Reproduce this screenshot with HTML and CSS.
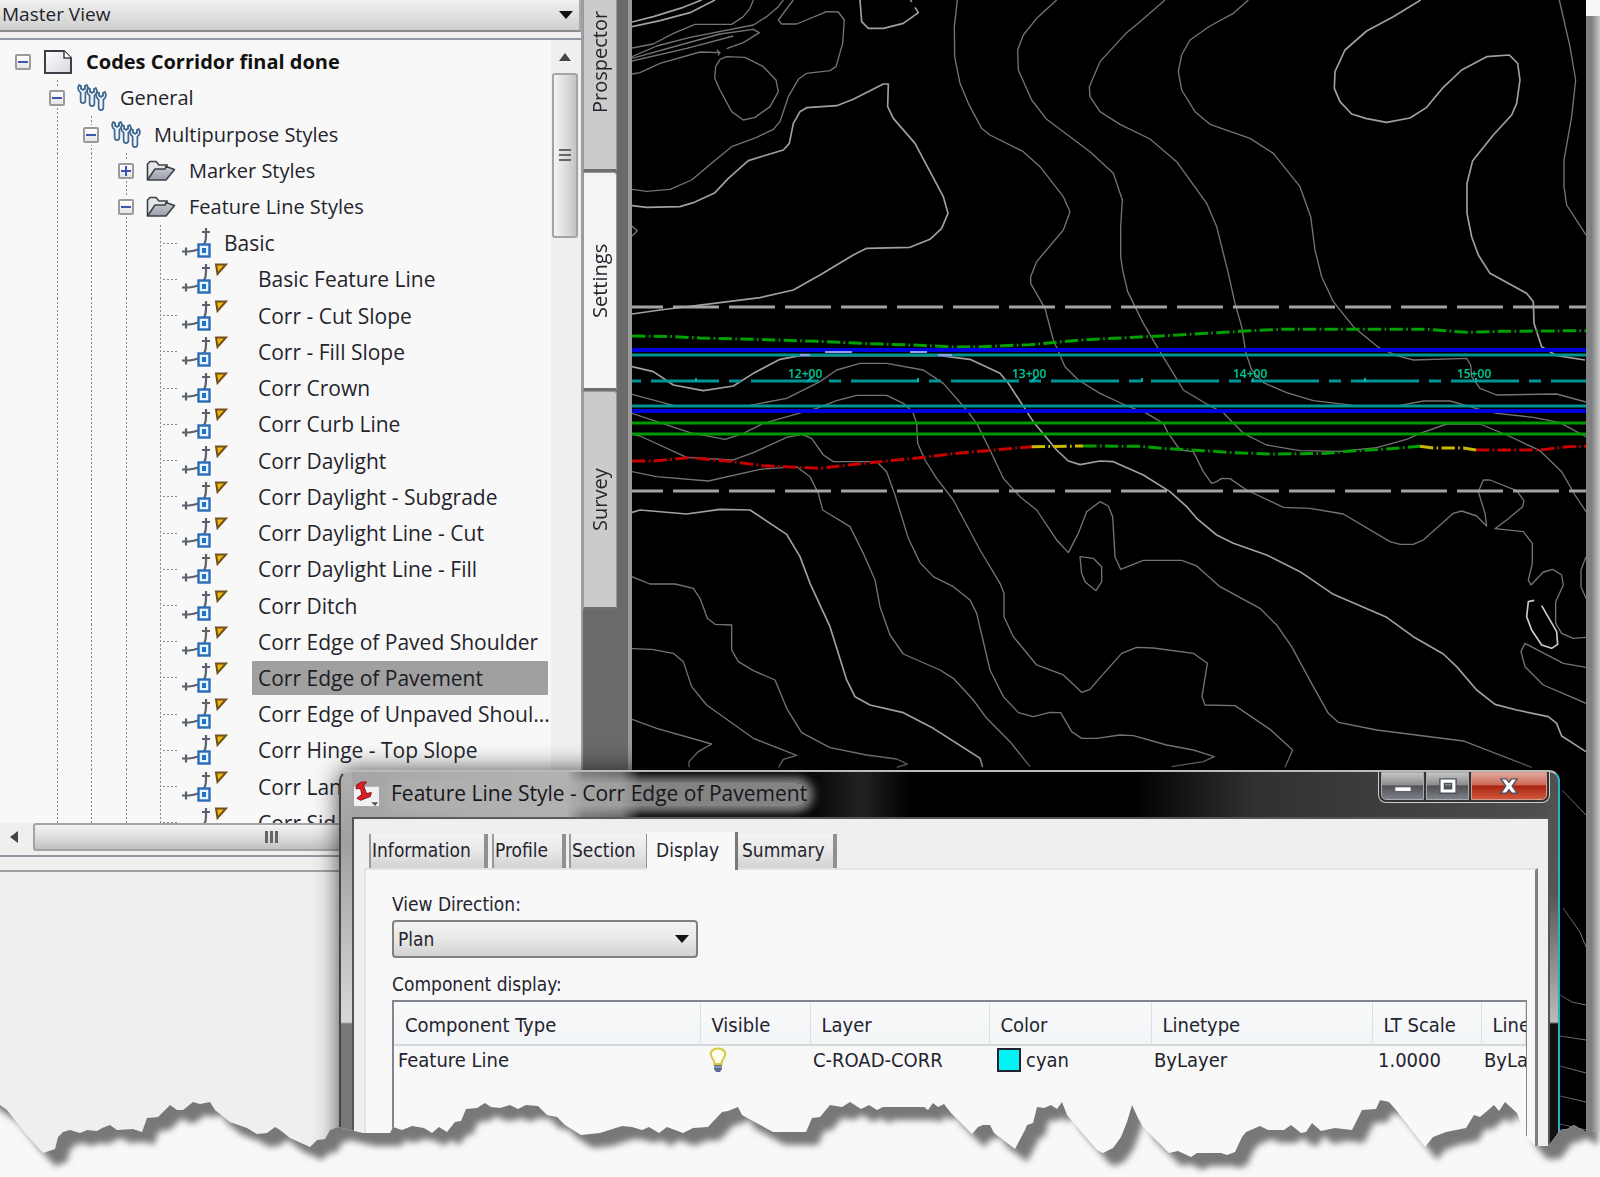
FILE: index.html
```html
<!DOCTYPE html>
<html lang="en">
<head>
<meta charset="utf-8">
<title>Feature Line Style - Corr Edge of Pavement</title>
<link rel="stylesheet" href="styles.css">
</head>
<body>
<svg class="defs" aria-hidden="true">
  <defs>
    <linearGradient id="paper" x1="0" y1="0" x2="1" y2="1"><stop offset="0" stop-color="#fff"/><stop offset="1" stop-color="#d4d7dc"/></linearGradient>
    <linearGradient id="folderFill" x1="0" y1="0" x2="0" y2="1"><stop offset="0" stop-color="#c9ccd2"/><stop offset="1" stop-color="#9a9ea8"/></linearGradient>
    <symbol id="doc" viewBox="0 0 30 26"><path d="M2 2H21L28 9V24H2Z" fill="url(#paper)" stroke="#3c4046" stroke-width="2"/><path d="M21 2V9H28" fill="#fff" stroke="#3c4046" stroke-width="1.5"/></symbol>
    <symbol id="wrench" viewBox="0 0 12 22"><path d="M2 1C0 4 1 7 3.500 9V17C3.500 21 8.500 21 8.500 17V9C11 7 12 4 10 1L8 2V5L6 6L4 5V2Z" fill="#eef4fa" stroke="#41698f" stroke-width="1.800"/><path d="M3 1V5L6 7L9 5V1L8 5H4Z" fill="#41698f"/></symbol>
    <symbol id="wrenches" viewBox="0 0 30 28"><use href="#wrench" x="0" y="0" width="12" height="21"/><use href="#wrench" x="9" y="3" width="12" height="21"/><use href="#wrench" x="18" y="7" width="12" height="21"/></symbol>
    <symbol id="folder" viewBox="0 0 30 22"><path d="M1.500 20V4L4 1.500H10L13 5H21V9" fill="#e4e6ea" stroke="#3c4046" stroke-width="1.600"/><path d="M1.500 20L9 9H19L20 6.500L28.500 9.500L20 20Z" fill="url(#folderFill)" stroke="#3c4046" stroke-width="1.600" stroke-linejoin="round"/></symbol>
    <symbol id="feat" viewBox="0 0 48 32"><path d="M24 1V9Q24 14 22 18M20 5H28M0 24.500H7Q12 24 16 22.500M4 20.500V28.500" fill="none" stroke="#59616b" stroke-width="2.200"/><rect x="16.500" y="17.500" width="11" height="12" fill="#e8f4ff" stroke="#2b6cb5" stroke-width="2.400"/><rect x="20" y="21" width="4" height="5" fill="#1874d2"/></symbol>
    <symbol id="flagged" viewBox="0 0 48 32"><use href="#feat" width="48" height="32"/><path d="M34 1.500H44L35.500 11Z" fill="#f2b90c" stroke="#70501a" stroke-width="2"/></symbol>
  </defs>
</svg>
<main class="desktop">
  <section class="toolspace" aria-label="Toolspace">
    <div class="view-box"><select class="view-select" aria-label="View"><option>Master View</option></select></div>
    <div class="tree-frame">
      <ul class="tree">
        <li class="row l0"><button class="exp minus" aria-label="Collapse"></button><svg class="ico doc"><use href="#doc"/></svg><span class="name bold">Codes Corridor final done</span></li>
        <li class="row l1"><button class="exp minus" aria-label="Collapse"></button><svg class="ico wr"><use href="#wrenches"/></svg><span class="name">General</span></li>
        <li class="row l2"><button class="exp minus" aria-label="Collapse"></button><svg class="ico wr"><use href="#wrenches"/></svg><span class="name">Multipurpose Styles</span></li>
        <li class="row l3"><button class="exp minus plus" aria-label="Expand"></button><svg class="ico fo"><use href="#folder"/></svg><span class="name">Marker Styles</span></li>
        <li class="row l3"><button class="exp minus" aria-label="Collapse"></button><svg class="ico fo"><use href="#folder"/></svg><span class="name">Feature Line Styles</span></li>
        <li class="row leaf first"><svg class="ico ft"><use href="#feat"/></svg><span class="name">Basic</span></li>
        <li class="row leaf"><svg class="ico ft"><use href="#flagged"/></svg><span class="name">Basic Feature Line</span></li>
        <li class="row leaf"><svg class="ico ft"><use href="#flagged"/></svg><span class="name">Corr - Cut Slope</span></li>
        <li class="row leaf"><svg class="ico ft"><use href="#flagged"/></svg><span class="name">Corr - Fill Slope</span></li>
        <li class="row leaf"><svg class="ico ft"><use href="#flagged"/></svg><span class="name">Corr Crown</span></li>
        <li class="row leaf"><svg class="ico ft"><use href="#flagged"/></svg><span class="name">Corr Curb Line</span></li>
        <li class="row leaf"><svg class="ico ft"><use href="#flagged"/></svg><span class="name">Corr Daylight</span></li>
        <li class="row leaf"><svg class="ico ft"><use href="#flagged"/></svg><span class="name">Corr Daylight - Subgrade</span></li>
        <li class="row leaf"><svg class="ico ft"><use href="#flagged"/></svg><span class="name">Corr Daylight Line - Cut</span></li>
        <li class="row leaf"><svg class="ico ft"><use href="#flagged"/></svg><span class="name">Corr Daylight Line - Fill</span></li>
        <li class="row leaf"><svg class="ico ft"><use href="#flagged"/></svg><span class="name">Corr Ditch</span></li>
        <li class="row leaf"><svg class="ico ft"><use href="#flagged"/></svg><span class="name">Corr Edge of Paved Shoulder</span></li>
        <li class="row leaf"><svg class="ico ft"><use href="#flagged"/></svg><span class="name selected">Corr Edge of Pavement</span></li>
        <li class="row leaf"><svg class="ico ft"><use href="#flagged"/></svg><span class="name">Corr Edge of Unpaved Shoul...</span></li>
        <li class="row leaf"><svg class="ico ft"><use href="#flagged"/></svg><span class="name">Corr Hinge - Top Slope</span></li>
        <li class="row leaf"><svg class="ico ft"><use href="#flagged"/></svg><span class="name">Corr Lan</span></li>
        <li class="row leaf"><svg class="ico ft"><use href="#flagged"/></svg><span class="name">Corr Sid</span></li>
      </ul>
      <div class="vbar"><button class="arrow up" aria-label="Scroll up"></button><div class="thumb"><i class="grip"></i></div></div>
    </div>
    <div class="hbar"><button class="arrow left" aria-label="Scroll left"></button><div class="thumb"><i class="grip"></i></div></div>
    <div class="item-view"></div>
  </section>
  <nav class="side-tabs" aria-label="Toolspace tabs">
    <button class="side-tab">Prospector</button>
    <button class="side-tab active">Settings</button>
    <button class="side-tab">Survey</button>
  </nav>
  <section class="canvas" aria-label="Drawing">
    <svg class="plan" viewBox="632 0 954 1177" preserveAspectRatio="xMinYMin slice">
      <g class="contour" transform="translate(620 0) scale(.33333)">
        <path d="M36 66L100 50L190 22L245 0M36 80L120 62L210 38L285 0" class="hi"/>
        <path d="M36 144L100 132L160 100L225 73H335L370 50L390 25L400 0M36 170L110 138L210 112L400 75L440 50L475 20L490 0M36 175L180 135L300 102L400 88L418 98L370 128L320 146M36 183L200 145L340 108M36 222L60 218L120 190L240 156L300 158L290 150M300 158L294 166"/>
        <path d="M320 170L375 172L430 200L468 240L475 275L450 320L405 352L370 360L335 335L300 270L284 235L287 200L300 178Z"/>
        <path d="M520 0L475 60L485 72H530L620 35L655 36L673 60L668 130L648 200L630 212L560 220L535 238L505 290L480 365L460 388L410 412L335 440L280 485L215 540L150 568L80 574L36 568"/>
        <path class="hi" d="M36 617L80 622L180 620L220 608L285 578L325 535L385 482L430 468L490 450L508 430L520 370L540 335L560 323L650 317L700 298L790 252H805L803 320L820 355L885 430L970 590L984 640L965 685L930 718L870 742L740 745L700 765L600 825L520 870L420 893L300 908L120 930L36 942"/>
        <path class="hi" d="M720 0L725 65L745 85H790L850 70L895 38L885 22M872 0L875 6"/>
        <path d="M36 678L52 692L36 708M1012 0L1003 80L1004 170L1020 250L1045 310L1085 385L1110 405L1210 455L1260 500L1330 590L1350 635L1330 690L1250 785L1232 830V850L1275 925L1300 1020L1335 1100L1375 1140L1440 1180L1515 1215L1540 1225L1580 1240L1630 1270L1645 1300L1680 1350L1720 1355L1750 1415L1775 1450L1790 1445L1805 1435L1830 1436L1880 1470L1990 1522L2070 1525L2170 1542L2310 1625L2340 1633H2380L2410 1620L2500 1540L2525 1533L2570 1548L2600 1578L2595 1540L2575 1475L2590 1440H2610L2690 1472L2712 1502L2708 1520L2660 1560L2625 1586L2710 1595L2737 1630V1690L2725 1740L2733 1755L2770 1716L2798 1708L2825 1725L2830 1755L2807 1805V1870L2825 1900L2860 1915L2898 1912"/>
        <path d="M1310 0L1250 55L1210 105L1193 150L1195 210L1235 300L1280 358L1410 455L1480 520L1507 600L1502 680V770L1508 810L1523 875L1570 970L1620 1055L1675 1145L1690 1170L1770 1218L1810 1238L1870 1300L1940 1335L2040 1352L2160 1354L2270 1343L2360 1318L2400 1300L2480 1272H2580L2660 1305L2760 1352L2825 1415L2865 1485L2898 1535"/>
        <path d="M1635 0L1560 65L1520 98L1440 185L1408 260L1410 290L1440 335L1500 373L1590 417L1670 485L1760 610L1790 680L1825 820L1845 910L1865 980L1878 1060L1895 1110L1930 1148L2000 1178L2080 1202L2200 1216M2340 1216L2410 1203H2490L2550 1220L2570 1226L2630 1240L2740 1252L2820 1268L2898 1310"/>
        <path d="M1885 0L1840 40L1770 78L1710 120L1685 165L1675 215L1685 270L1725 335L1770 373L1890 415L1960 460L2040 560L2072 650L2085 750L2105 830L2140 905L2200 980L2275 1042L2330 1067L2380 1080L2540 1075L2552 1095L2555 1130L2580 1165L2630 1185L2810 1182L2898 1206"/>
        <path class="hi" d="M2402 0L2320 50L2240 93L2175 150L2145 215L2143 265L2160 305L2195 342L2240 356L2300 367L2370 354L2420 322L2470 262L2525 210L2600 170L2668 165L2693 190L2700 240L2690 310L2675 345L2620 405L2558 482L2541 550V640L2555 710L2575 765L2610 820L2720 880L2740 905L2742 970L2765 1040L2810 1067L2895 1080"/>
        <path d="M2818 0L2850 140L2867 240L2855 350L2832 480V560L2840 615L2898 705"/>
        <path class="hi" d="M36 1100L100 1115L160 1155L250 1172L340 1158L400 1120L480 1078L540 1067H960L1050 1078L1140 1120L1165 1150L1240 1265L1310 1350L1345 1383L1380 1394L1440 1383L1480 1385L1570 1425L1650 1475L1700 1520L1730 1555L1790 1605L1840 1630L1940 1665L2040 1715L2140 1783L2300 1852L2380 1910L2470 1962L2510 2000L2570 2070L2625 2113L2690 2130L2785 2150L2810 2170L2825 2208L2898 2255"/>
        <path d="M36 1183L160 1216M390 1216L500 1195L600 1145L650 1110L720 1090H800L910 1110L970 1150L1040 1230L1070 1270L1110 1350L1150 1435L1200 1490L1250 1530L1310 1620L1345 1658L1375 1600L1400 1535L1440 1505L1465 1518L1478 1550L1485 1670L1502 1708L1570 1681H1685L1730 1698L1800 1760L1920 1825L1970 1875L2015 1940L2080 2060L2125 2140L2155 2167L2270 2190L2530 2223L2735 2302"/>
        <path d="M36 1240L210 1298L315 1318L370 1300L430 1270L590 1225L650 1202L710 1186H800L850 1210L878 1235L890 1270L893 1330L915 1380L950 1435L1000 1500L1080 1650L1140 1750L1152 1780V1850L1180 1910L1250 1995L1330 2025L1385 2077L1410 2068L1440 2033L1505 1960L1550 1942L1600 1944L1720 1960L1762 1990L1746 2090L1755 2115L1845 2117L1950 2188L2018 2250L1995 2302"/>
        <path d="M36 1303L60 1308L200 1372L340 1380L400 1358L500 1312L545 1303L575 1315L610 1365L640 1385H770L800 1415L825 1485L865 1615L900 1688L940 1730L1000 1760L1050 1800L1070 1840L1110 2010L1150 2090L1195 2138L1240 2150L1290 2137L1322 2138L1355 2195L1385 2215H1430L1500 2205L1540 2207L1640 2235L1720 2250L1783 2270L1750 2285L1655 2300"/>
        <path d="M36 1415L110 1430L265 1443L420 1408L530 1400L570 1430L595 1480L608 1530L690 1580L730 1660L765 1740L780 1820L810 1905L850 1962L960 2010L1000 2035L1060 2100L1100 2155L1170 2225L1230 2300"/>
        <path class="hi" d="M36 1537L60 1530L200 1542L300 1528L390 1530L500 1603L540 1670L570 1750L630 1880L680 2040L705 2090L750 2115L850 2138L940 2185L1080 2275L1088 2302"/>
        <path d="M36 1730L90 1752H165L220 1765L240 1795L262 1855L285 1873L335 1875V1950L355 1985L400 2012L465 2040L500 2125L545 2198L630 2243L740 2265L830 2277L862 2292L830 2302M36 1946L95 1948L160 1960L190 1985L215 2060L260 2115L400 2215L530 2266L490 2278L475 2302M36 2158L110 2185L275 2232L235 2255L207 2285V2302"/>
        <path d="M1380 1670L1420 1675L1445 1700V1745L1428 1772L1395 1745L1385 1720ZM2898 2002L2830 1990L2715 1930L2703 1955L2715 2000L2770 2055L2898 2110M2898 1670L2883 1710V1760L2898 1795"/>
        <path class="white" d="M2743 1801L2725 1805L2720 1850L2735 1890L2765 1935L2795 1945L2813 1933L2810 1895L2765 1817"/>
      </g>
      <path class="contour" d="M1562 790L1586 815M1563 908L1580 932L1586 947M1560 995L1572 1002L1586 1005M1560 1036L1586 1040M1560 1066L1586 1073M1560 1096L1586 1102M1560 1124L1586 1130"/>
      <path class="limit" d="M632 307H1586M632 491H1586"/>
      <g class="slope" transform="translate(620 0) scale(.33333)">
        <path stroke="#00a000" d="M36 1008L165 1010L240 1014L400 1018L600 1024L750 1031L900 1036L1000 1041L1090 1040L1230 1034L1380 1020L1440 1017L1580 1010L1760 1000L1860 994L1980 988H2420L2540 997L2640 994L2898 992"/>
        <path stroke="#c80000" d="M36 1383H100L210 1373L320 1383L430 1397L600 1405L640 1400L780 1385L900 1373L1000 1361L1100 1352L1235 1340M2568 1350H2750L2780 1348L2840 1340L2898 1339"/>
        <path stroke="#c8b800" d="M1235 1340L1390 1338M2400 1339L2440 1344H2530L2568 1350"/>
        <path stroke="#00a000" d="M1390 1338L1560 1339L1640 1346L1750 1352L1840 1358L1960 1362L2120 1360L2180 1354L2290 1348L2400 1339"/>
      </g>
      <path class="edge" d="M632 355H1586M632 406H1586"/>
      <path class="curb" d="M632 350H1586M632 411H1586"/>
      <path class="walk" d="M632 423H1586M632 434H1586"/>
      <path class="center" d="M632 381H1586"/>
      <path class="tick" d="M696 378V382M918 378V382M1142 378V382M1365 378V382M1031 382L1036 377M807 382L812 377M1253 378V382M1476 378V382"/>
      <path class="glint" d="M825 352H852M910 352H927M800 355H810M938 355H952"/>
      <g class="station"><text x="788" y="378">12+00</text><text x="1012" y="378">13+00</text><text x="1233" y="378">14+00</text><text x="1457" y="378">15+00</text></g>
    </svg>
  </section>
  <div class="edge-shade"></div>

  <section class="dialog" aria-label="Feature Line Style">
    <header class="title-bar">
      <svg class="app-icon" viewBox="0 0 28 28"><rect x="1" y="6" width="26" height="20" fill="#f2f2f2"/><path d="M4 4L9 1H14L11 5L14 13L19 12L18 16L8 20L4 18L9 14L8 8L3 8Z" fill="#d61f26" stroke="#8e1014"/><path d="M19 22H26L23 26Z" fill="#555"/></svg>
      <h1 class="title">Feature Line Style - Corr Edge of Pavement</h1>
      <div class="win-buttons">
        <button class="win" aria-label="Minimize"><svg viewBox="0 0 24 20"><rect x="3" y="11" width="18" height="5" fill="#fff" stroke="#555b66"/></svg></button>
        <button class="win" aria-label="Maximize"><svg viewBox="0 0 24 20"><path fill-rule="evenodd" d="M3 2H21V18H3ZM8 7V13H16V7Z" fill="#fff" stroke="#4c5260" stroke-width="1.500"/></svg></button>
        <button class="win close" aria-label="Close"><svg viewBox="0 0 24 20"><path d="M3 2H9L12 6L15 2H21L15.500 10L21 18H15L12 14L9 18H3L8.500 10Z" fill="#fff" stroke="#4f5262" stroke-width="1.500"/></svg></button>
      </div>
    </header>
    <div class="client">
      <div class="tabs" role="tablist">
        <button class="tab t-info" role="tab">Information</button>
        <button class="tab t-prof" role="tab">Profile</button>
        <button class="tab t-sect" role="tab">Section</button>
        <button class="tab t-disp current" role="tab">Display</button>
        <button class="tab t-summ" role="tab">Summary</button>
      </div>
      <div class="page">
        <label class="label" for="dir">View Direction:</label>
        <div class="dir-box"><select id="dir" class="dir"><option>Plan</option></select></div>
        <p class="label" id="comp">Component display:</p>
        <div class="grid-frame">
          <table class="grid" aria-labelledby="comp">
            <colgroup><col class="c1"><col class="c2"><col class="c3"><col class="c4"><col class="c5"><col class="c6"><col></colgroup>
            <thead><tr><th>Component Type</th><th>Visible</th><th>Layer</th><th>Color</th><th>Linetype</th><th>LT Scale</th><th>Line</th></tr></thead>
            <tbody><tr><td>Feature Line</td><td class="vis"><svg class="bulb" viewBox="0 0 18 26"><path d="M5.500 17Q5.500 14 3.500 11.500C-1 5 4 1.500 9 1.500S19 5 14.500 11.500Q12.500 14 12.500 17Z" fill="#fffef0" stroke="#d8c83c" stroke-width="2"/><path d="M5 18H13V22L11 25H7L5 22Z" fill="#5c6b94"/><path d="M5 20H13" stroke="#c0c8dc"/></svg></td><td>C-ROAD-CORR</td><td class="col"><span class="color"><i class="swatch"></i>cyan</span></td><td>ByLayer</td><td class="num">1.0000</td><td>ByLa</td></tr></tbody>
          </table>
        </div>
      </div>
    </div>
  </section>

  <svg class="torn" viewBox="0 1097 1600 80" preserveAspectRatio="none" aria-hidden="true">
    <defs>
      <path id="rip" d="M0 1105L7 1110L25 1133L43 1153L55 1149L58 1137L63 1132L70 1130L80 1133L87 1130L97 1131L102 1128L110 1125L117 1130L133 1129L142 1132L147 1118L158 1117L170 1105L177 1110H183L193 1102L200 1104L210 1102L215 1110L230 1122L247 1128L257 1134L267 1133L275 1127L280 1130L290 1138L310 1147L317 1140L325 1139L330 1130L338 1127L350 1130L363 1133H390L393 1127L402 1130L412 1126L424 1128L432 1133L439 1127L447 1132L455 1122L461 1121L466 1109L477 1108L485 1103L491 1107L500 1108L510 1105L518 1109L526 1105L538 1106L547 1115L557 1117L565 1125L581 1135L600 1133L622 1126L632 1127L642 1130L649 1127L659 1133L667 1127L683 1133L693 1128L708 1127L722 1112L728 1111L738 1107L742 1115L751 1120L773 1132H806L812 1118L820 1117L830 1105L842 1107L850 1102L861 1109L869 1105L877 1110L883 1107H924L928 1110L933 1103L938 1107L944 1104L951 1113L972 1134L978 1127L983 1125L990 1125L994 1133L1015 1149L1025 1130L1027 1125L1033 1123L1037 1107L1044 1108L1051 1105L1057 1109L1062 1102L1067 1115L1097 1150L1103 1153L1113 1148L1121 1137L1127 1122L1132 1105L1138 1118L1143 1127L1169 1153L1178 1151L1191 1157L1197 1153H1221L1227 1155L1235 1152L1242 1137L1246 1132L1260 1126L1268 1130H1284L1291 1125L1301 1133L1306 1132L1312 1123L1321 1131L1335 1128L1352 1130L1362 1110L1376 1109L1380 1100L1389 1102L1396 1110L1425 1147L1433 1137L1446 1132L1466 1128L1474 1115L1480 1117L1494 1105L1499 1111L1505 1102L1517 1113L1524 1133L1535 1146H1548L1553 1140L1560 1130L1567 1129L1574 1125L1579 1128L1586 1132V1060H-30V1085Z"/>
      <clipPath id="below"><path d="M0 1105L7 1110L25 1133L43 1153L55 1149L58 1137L63 1132L70 1130L80 1133L87 1130L97 1131L102 1128L110 1125L117 1130L133 1129L142 1132L147 1118L158 1117L170 1105L177 1110H183L193 1102L200 1104L210 1102L215 1110L230 1122L247 1128L257 1134L267 1133L275 1127L280 1130L290 1138L310 1147L317 1140L325 1139L330 1130L338 1127L350 1130L363 1133H390L393 1127L402 1130L412 1126L424 1128L432 1133L439 1127L447 1132L455 1122L461 1121L466 1109L477 1108L485 1103L491 1107L500 1108L510 1105L518 1109L526 1105L538 1106L547 1115L557 1117L565 1125L581 1135L600 1133L622 1126L632 1127L642 1130L649 1127L659 1133L667 1127L683 1133L693 1128L708 1127L722 1112L728 1111L738 1107L742 1115L751 1120L773 1132H806L812 1118L820 1117L830 1105L842 1107L850 1102L861 1109L869 1105L877 1110L883 1107H924L928 1110L933 1103L938 1107L944 1104L951 1113L972 1134L978 1127L983 1125L990 1125L994 1133L1015 1149L1025 1130L1027 1125L1033 1123L1037 1107L1044 1108L1051 1105L1057 1109L1062 1102L1067 1115L1097 1150L1103 1153L1113 1148L1121 1137L1127 1122L1132 1105L1138 1118L1143 1127L1169 1153L1178 1151L1191 1157L1197 1153H1221L1227 1155L1235 1152L1242 1137L1246 1132L1260 1126L1268 1130H1284L1291 1125L1301 1133L1306 1132L1312 1123L1321 1131L1335 1128L1352 1130L1362 1110L1376 1109L1380 1100L1389 1102L1396 1110L1425 1147L1433 1137L1446 1132L1466 1128L1474 1115L1480 1117L1494 1105L1499 1111L1505 1102L1517 1113L1524 1133L1535 1146H1548L1553 1140L1560 1130L1567 1129L1574 1125L1579 1128L1586 1132H1600V1177H0Z"/></clipPath>
      <filter id="soft" x="-5%" y="-50%" width="110%" height="200%"><feGaussianBlur stdDeviation="3"/></filter>
    </defs>
    <g clip-path="url(#below)">
      <rect y="1097" width="1600" height="80" fill="#f8f8f8"/>
      <g filter="url(#soft)"><use href="#rip" transform="translate(12 13)" fill="#787878"/></g>
    </g>
  </svg>
</main>
</body>
</html>
```
FILE: styles.css
```css
* { box-sizing: border-box; }
body { margin: 0; background: #f8f8f8; color: #24242c; font-family: "Open Sans", "Noto Sans", sans-serif; font-size: 20px; }
button, select { font: inherit; color: inherit; margin: 0; padding: 0; border: 0; background: none; border-radius: 0; }
.defs { position: absolute; width: 0; height: 0; }
.desktop { position: relative; display: flex; min-height: 100vh; overflow: hidden; }

/* toolspace */
.toolspace { flex: none; width: 583px; display: flex; flex-direction: column; background: #efefef; border-right: 2px solid #9a9ea6; }
.view-box { position: relative; height: 32px; background: linear-gradient(#f1f1f1, #cfcfcf); border-bottom: 2px solid #8a8a8a; border-right: 2px solid #aaa; }
.view-select { appearance: none; width: 100%; height: 28px; padding-left: 2px; font-size: 19px; line-height: 28px; }
.view-box::after, .dir-box::after { content: ""; position: absolute; right: 6px; top: 11px; border: 7px solid transparent; border-top: 8px solid #111; border-bottom: 0; pointer-events: none; }
.tree-frame { display: flex; height: 785px; margin-top: 6px; border-top: 2px solid #9197a3; background: #f8f8f8; overflow: hidden; }
.tree { flex: 1; height: 797px; margin: 4px 0 0; padding: 0; list-style: none; display: grid; grid-auto-rows: 1fr; }
.row { --dots: repeating-linear-gradient(#888 0 2px, transparent 2px 4px); display: flex; align-items: center; white-space: nowrap; background-repeat: no-repeat; background-size: 1px 100%; }
.l0 { padding-left: 15px; }
.l1 { padding-left: 49px; background-image: var(--dots); background-position: 57px 0; }
.l2 { padding-left: 83px; background-image: var(--dots), var(--dots); background-position: 57px 0, 91px 0; }
.l3 { padding-left: 118px; background-image: var(--dots), var(--dots), var(--dots); background-position: 57px 0, 91px 0, 126px 0; }
.leaf { padding-left: 182px; font-size: 21px; background-image: var(--dots), var(--dots), var(--dots), var(--dots), repeating-linear-gradient(90deg, #888 0 2px, transparent 2px 4px); background-size: 1px 100%, 1px 100%, 1px 100%, 1px 100%, 14px 1px; background-position: 57px 0, 91px 0, 126px 0, 160px 0, 163px 50%; }
.exp { position: relative; width: 16px; height: 16px; background: linear-gradient(#fff, #e4e4e4); border: 2px solid #9a9a9a; border-radius: 2px; box-shadow: 0 0 0 2px #f8f8f8; }
.exp::before, .plus::after { content: ""; position: absolute; left: 1px; top: 5px; width: 10px; height: 2px; background: #3d55b0; }
.exp::after { left: 5px; top: 1px; width: 2px; height: 10px; }
.ico { flex: none; width: 30px; margin-left: 12px; margin-right: 13px; }
.doc { height: 26px; }
.wr { height: 28px; }
.fo { height: 22px; }
.ft { width: 48px; height: 32px; margin: 0 20px 0 0; }
.name { line-height: 34px; }
.bold { font-weight: 700; color: #111; }
.leaf .name { margin-left: 2px; padding-left: 6px; }
.first .name { margin-left: -32px; }
.selected { flex: 1; background: #a0a0a0; margin-right: 3px; color: #1c1c24; }
.vbar { flex: none; width: 30px; padding: 0 2px 0 0; display: flex; flex-direction: column; align-items: center; background: #efefef; }
.arrow { width: 28px; height: 33px; display: grid; place-items: center; }
.arrow::before { content: ""; border: 6px solid transparent; }
.up::before { border-bottom: 8px solid #444; border-top: 0; }
.left::before { border-right: 8px solid #444; border-left: 0; }
.thumb { display: grid; place-items: center; border: 2px solid #a4a4a4; border-radius: 3px; }
.vbar .thumb { width: 26px; height: 165px; background: linear-gradient(90deg, #f4f4f4, #dedede 50%, #c4c4c8); }
.grip { width: 12px; height: 14px; background: repeating-linear-gradient(#666 0 2px, transparent 2px 5px); }
.hbar { display: flex; height: 34px; background: #efefef; border-bottom: 2px solid #9197a3; }
.hbar .arrow { width: 33px; height: 28px; }
.hbar .arrow::before { margin-right: 5px; }
.hbar .thumb { width: 478px; height: 28px; background: linear-gradient(#f4f4f4, #dedede 50%, #c0c0c4); }
.hbar .grip { width: 14px; height: 12px; background: repeating-linear-gradient(90deg, #666 0 3px, transparent 3px 5px); }
.item-view { flex: 1; margin-top: 13px; border-top: 2px solid #a0a0a0; background: #efefef; }

/* vertical tabs */
.side-tabs { flex: none; width: 49px; padding-right: 14px; background: #6a6a6a; border-right: 4px solid #999; margin-top: -47px; display: flex; flex-direction: column; }
.side-tab { width: 34px; height: 219px; writing-mode: vertical-rl; transform: rotate(180deg); text-align: center; background: #cbcbcb; border: 1px solid #999; border-top: 3px solid #6f6f6f; border-radius: 3px 0 0 3px; font-size: 20px; line-height: 32px; }
.side-tab.active { background: #f4f4f4; }

/* drawing */
.canvas { flex: 1; min-width: 0; position: relative; background: #000; overflow: hidden; }
.plan { display: block; width: 100%; height: 100%; position: absolute; }
.contour { fill: none; stroke: #747474; stroke-width: 4px; stroke-linejoin: round; }
path.contour { stroke-width: 1px; stroke: #777; }
.hi { stroke: #a0a0a0; stroke-width: 5px; }
.white { stroke: #ccc; stroke-width: 5px; }
.limit { stroke: #a4a4a4; stroke-width: 3px; stroke-dasharray: 46 10; stroke-dashoffset: 15px; }
.slope { fill: none; stroke-width: 9px; stroke-dasharray: 40 10 5 10; }
.edge { stroke: #009494; stroke-width: 3px; }
.curb { stroke: #0000dc; stroke-width: 4px; }
.walk { stroke: #009a00; stroke-width: 3px; }
.center { stroke: #009494; stroke-width: 3px; stroke-dasharray: 68 10 12 10; stroke-dashoffset: 81px; }
.tick { stroke: #00b0b0; stroke-width: 2px; }
.glint { stroke: #8f9cf0; stroke-width: 2px; }
.station { fill: #00c89a; font-size: 12px; font-weight: 600; }
.edge-shade { flex: none; width: 14px; margin-top: 16px; background: linear-gradient(90deg, #808080 40%, #c8c8c8); }

/* dialog */
.dialog { position: absolute; left: 339px; right: 40px; top: 770px; bottom: 0; padding: 0 8px 0 11px; display: flex; flex-direction: column; border: 2px solid #444; border-top-color: #bbb; border-right-color: #2ab0c0; border-radius: 11px 11px 0 0; box-shadow: 0 0 24px rgba(0, 0, 0, .7);
  background:
    linear-gradient(#b0b0b0, #a0a0a0 70px, #d8d8d8 250px, #777 252px) 0 0 / 11px 100% no-repeat,
    linear-gradient(#505050, #555 120px, #bbb 250px, #111 252px) 100% 0 / 10px 100% no-repeat,
    linear-gradient(90deg, #a4a4a4, #b4b4b4 225px, #777 242px, #666 280px, #000 300px, #000 460px, #222 520px, #000 570px, #000 65%, #303030 75%, #505050); }
.title-bar { flex: none; display: flex; height: 45px; align-items: flex-start; }
.app-icon { flex: none; width: 27px; height: 27px; margin: 9px 11px 0 1px; }
.title { position: relative; z-index: 0; margin: 0 auto 0 0; font-size: 21px; font-weight: 400; line-height: 43px; color: #16161c; white-space: nowrap; }
.title::before { content: ""; position: absolute; z-index: -1; inset: 11px 0 9px; border-radius: 10px; background: rgba(176, 176, 176, .75); box-shadow: 0 0 10px 6px rgba(176, 176, 176, .75); }
.win-buttons { display: flex; gap: 2px; padding: 0 2px 2px; border: 1px solid #ccc; border-top: 0; border-radius: 0 0 8px 8px; background: #333; }
.win { width: 43px; height: 28px; display: grid; place-items: center; background: linear-gradient(#c4c4c4, #8d8d8d 45%, #505256 50%, #7c7f88); border: 1px solid #aaa; border-radius: 0 0 0 5px; }
.win + .win { border-radius: 0; }
.win svg { width: 22px; height: 18px; }
.win.close { width: 76px; background: linear-gradient(#e0a79c, #cc6a58 45%, #a82410 50%, #d0583c); border-color: #d8988c; border-radius: 0 0 5px 0; }
.client { flex: 1; border: 2px solid #555; border-bottom: 0; background: #efefef; padding: 11px 10px 0; display: flex; flex-direction: column; font-family: "DejaVu Sans Condensed", "DejaVu Sans", sans-serif; font-stretch: condensed; font-size: 19px; color: #24242f; }
.tabs { display: flex; align-items: flex-end; height: 38px; padding-left: 5px; }
.tab { height: 34px; padding: 0 0 3px 1px; text-align: left; background: linear-gradient(#f4f4f4, #e8e8e8 50%, #d2d2d2); border-left: 2px solid #999; border-right: 4px solid #909090; white-space: nowrap; }
.t-info { width: 119px; margin-right: 4px; }
.t-prof { width: 74px; margin-right: 3px; }
.t-sect { width: 78px; border-right-width: 1px; }
.t-disp { width: 91px; }
.t-summ { width: 99px; border-left: 0; padding-left: 4px; }
.tab.current { position: relative; height: 38px; margin-bottom: -2px; padding-left: 9px; background: #f8f8f8; border-left: 0; border-right: 3px solid #777; }
.page { flex: 1; background: #f8f8f8; border: 2px solid #e4e4e4; border-right: 3px solid #808080; padding: 20px 8px 0 26px; }
.label { display: block; margin: 0; line-height: 28px; }
.dir-box { position: relative; width: 306px; height: 38px; margin: 2px 0 12px; }
.dir { appearance: none; width: 100%; height: 38px; padding-left: 4px; border: 2px solid #808080; border-radius: 4px; background: linear-gradient(#f2f2f2, #e8e8e8 50%, #d2d2d2); }
.dir-box::after { right: 9px; top: 15px; }
.grid-frame { height: 180px; margin-top: 2px; border: 2px solid #80868f; border-right-width: 1px; overflow: hidden; }
.grid { width: 100%; table-layout: fixed; border-collapse: collapse; text-align: left; font-size: 20px; }
.grid th { height: 43px; padding: 3px 0 0 11px; font-weight: 400; white-space: nowrap; background: linear-gradient(#f8f8f8, #f2f5f7); border-right: 1px solid #dde1e4; border-bottom: 2px solid #d4d6d8; }
.grid td { height: 28px; padding: 0 0 0 3px; white-space: nowrap; }
.grid td:first-child { padding-left: 4px; }
.grid .num { padding-left: 6px; }
.grid .vis { padding-left: 9px; }
.grid .col { padding-left: 8px; }
.c1 { width: 306px; } .c2 { width: 110px; } .c3 { width: 179px; } .c4 { width: 162px; } .c5 { width: 221px; } .c6 { width: 109px; }
.bulb { display: block; width: 18px; height: 26px; }
.color { display: flex; align-items: center; gap: 5px; }
.swatch { width: 24px; height: 24px; background: #00f4f4; border: 2px solid #223; }
.torn { position: absolute; left: 0; bottom: 0; width: 100%; height: 80px; }
```
